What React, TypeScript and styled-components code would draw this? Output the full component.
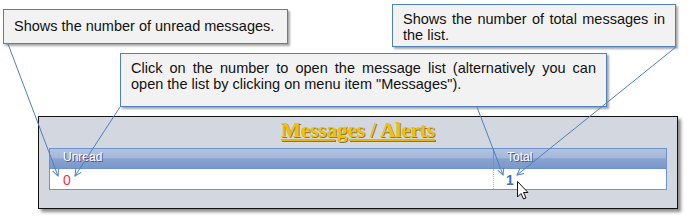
import React from "react";
import styled, { createGlobalStyle } from "styled-components";

const GlobalStyle = createGlobalStyle`
  html, body {
    margin: 0;
    padding: 0;
    background: #ffffff;
  }
  body {
    font-family: "Liberation Sans", Arial, sans-serif;
  }
`;

const Page = styled.div`
  position: relative;
  width: 690px;
  height: 219px;
  overflow: hidden;
  background: #ffffff;
  padding: 116px 0 0 38px;
  box-sizing: border-box;
`;

const Panel = styled.section`
  width: 640px;
  height: 93px;
  box-sizing: border-box;
  background: #d3d7df;
  border: 1px solid #111;
  box-shadow: 3px 3px 3px rgba(0, 0, 0, 0.45);
  padding: 0 10px;
  display: flex;
  flex-direction: column;
`;

const Title = styled.h2`
  margin: 0;
  height: 31px;
  padding-top: 1px;
  box-sizing: border-box;
  text-align: center;
  font-family: "Liberation Serif", "Times New Roman", serif;
  font-size: 21px;
  font-weight: bold;
  line-height: 24px;
  color: #f2c200;
  text-decoration: underline;
  text-decoration-color: #e8b800;
  text-shadow: 1px 1px 0 #8c7430;
`;

const Table = styled.div`
  display: grid;
  grid-template-columns: 443px 1fr;
  border: 1px solid #6a93cf;
  background: #ffffff;
`;

const HeadCell = styled.div<{ $first?: boolean }>`
  height: 20px;
  box-sizing: border-box;
  padding-left: 13px;
  font-size: 12px;
  line-height: 17px;
  color: #ffffff;
  text-shadow: 1px 1px 0 #5a4d7a;
  background: linear-gradient(
    to bottom,
    #b2c3e0 0%,
    #a5b8d9 45%,
    #89a3d0 52%,
    #7a98ca 100%
  );
  border-left: ${(p) => (p.$first ? "none" : "1px solid #6a93cf")};
  border-bottom: 1px solid #6a93cf;
`;

const ValueCell = styled.div<{ $color: string; $first?: boolean }>`
  height: 20px;
  box-sizing: border-box;
  padding-left: ${(p) => (p.$first ? "13px" : "12px")};
  font-size: 14px;
  font-weight: ${(p) => (p.$first ? "normal" : "bold")};
  line-height: 22px;
  color: ${(p) => p.$color};
  border-left: ${(p) => (p.$first ? "none" : "1px dotted #a9c0e4")};
`;

const Callout = styled.div<{ $x: number; $y: number; $w: number; $h: number }>`
  position: absolute;
  left: ${(p) => p.$x}px;
  top: ${(p) => p.$y}px;
  width: ${(p) => p.$w}px;
  height: ${(p) => p.$h}px;
  box-sizing: border-box;
  background: #f2f2f2;
  border: 1px solid #4f7fbd;
  box-shadow: 2px 2px 2px rgba(0, 0, 0, 0.35);
  padding: ${(p) => (p.$h < 40 ? "8px 10px 0" : "6px 10px 0")};
  font-size: 14.5px;
  line-height: 16px;
  color: #111;
  z-index: 2;
`;

const Line = styled.span<{ $full?: boolean }>`
  display: block;
  text-align: ${(p) => (p.$full ? "justify" : "left")};
  text-align-last: ${(p) => (p.$full ? "justify" : "left")};
  white-space: ${(p) => (p.$full ? "normal" : "nowrap")};
`;

const Overlay = styled.svg`
  position: absolute;
  left: 0;
  top: 0;
  width: 690px;
  height: 219px;
  pointer-events: none;
  z-index: 3;
`;

const arrows = [
  [8, 44, 58, 176],
  [120, 107, 75, 176],
  [477, 107, 503, 175],
  [676, 47, 517, 175],
];

export default function App() {
  return (
    <>
      <GlobalStyle />
      <Page>
        <Panel>
          <Title>Messages / Alerts</Title>
          <Table>
            <HeadCell $first>Unread</HeadCell>
            <HeadCell>Total</HeadCell>
            <ValueCell $first $color="#f2323c">0</ValueCell>
            <ValueCell $color="#3a6fc4">1</ValueCell>
          </Table>
        </Panel>

        <Callout $x={3} $y={9} $w={285} $h={35}>
          <Line>Shows the number of unread messages.</Line>
        </Callout>
        <Callout $x={120} $y={53} $w={487} $h={54}>
          <Line $full>
            Click on the number to open the message list (alternatively you can
          </Line>
          <Line>open the list by clicking on menu item "Messages").</Line>
        </Callout>
        <Callout $x={392} $y={4} $w={284} $h={43}>
          <Line $full>Shows the number of total messages in</Line>
          <Line>the list.</Line>
        </Callout>

        <Overlay viewBox="0 0 690 219">
          <defs>
            <marker
              id="head"
              viewBox="0 0 10 10"
              refX="9"
              refY="5"
              markerWidth="8"
              markerHeight="8"
              orient="auto"
              markerUnits="userSpaceOnUse"
            >
              <path d="M1 1 L9 5 L1 9" fill="none" stroke="#4f7fbd" strokeWidth="1.2" />
            </marker>
          </defs>
          {arrows.map(([x1, y1, x2, y2], i) => (
            <line
              key={i}
              x1={x1}
              y1={y1}
              x2={x2}
              y2={y2}
              stroke="#4f7fbd"
              strokeWidth="1"
              markerEnd="url(#head)"
            />
          ))}
          <path
            d="M517.5 181.5 L517.5 197 L521 193.5 L523.5 199 L526 198 L523.5 192.5 L528 192.5 Z"
            fill="#ffffff"
            stroke="#111"
            strokeWidth="1"
            strokeLinejoin="round"
          />
        </Overlay>
      </Page>
    </>
  );
}
